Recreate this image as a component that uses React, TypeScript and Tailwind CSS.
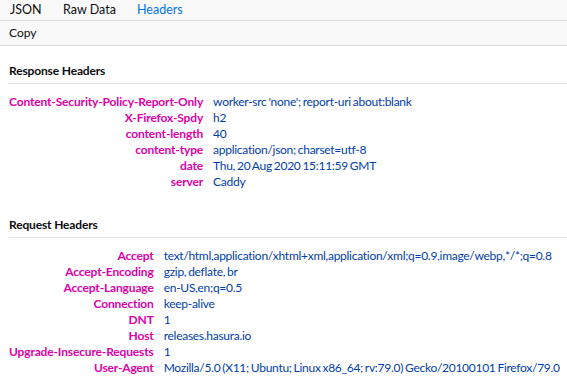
const response = [
  ["Content-Security-Policy-Report-Only", "worker-src 'none'; report-uri about:blank"],
  ["X-Firefox-Spdy", "h2"],
  ["content-length", "40"],
  ["content-type", "application/json; charset=utf-8"],
  ["date", "Thu, 20 Aug 2020 15:11:59 GMT"],
  ["server", "Caddy"],
];

const request = [
  ["Accept", "text/html,application/xhtml+xml,application/xml;q=0.9,image/webp,*/*;q=0.8"],
  ["Accept-Encoding", "gzip, deflate, br"],
  ["Accept-Language", "en-US,en;q=0.5"],
  ["Connection", "keep-alive"],
  ["DNT", "1"],
  ["Host", "releases.hasura.io"],
  ["Upgrade-Insecure-Requests", "1"],
  ["User-Agent", "Mozilla/5.0 (X11; Ubuntu; Linux x86_64; rv:79.0) Gecko/20100101 Firefox/79.0"],
];

function Section({ title, rows }: { title: string; rows: string[][] }) {
  return (
    <div>
      <div className="ml-[9px] pb-[4px] border-b border-[#e0e0e2] font-bold text-[12px] leading-[16px] tracking-[-0.15px] text-[#0c0c0d]">
        {title}
      </div>
      <div className="mt-[10px] grid grid-cols-[auto_1fr] gap-x-[10px] pl-[9px] text-[12px] leading-[16px]">
        {rows.map(([k, v]) => (
          <div key={k} className="contents">
            <div className="text-right font-bold tracking-[-0.15px] text-[#dd00a9] whitespace-nowrap">{k}</div>
            <div className="text-[#003eaa] whitespace-nowrap tracking-[-0.28px] [word-spacing:-0.9px]">{v}</div>
          </div>
        ))}
      </div>
    </div>
  );
}

export default function App() {
  return (
    <div className="w-[567px] h-[382px] bg-white overflow-hidden font-['Lato',sans-serif]">
      <div className="h-[21px] bg-[#f9f9fa] border-b border-[#dcdcde] flex items-center pl-[10px] text-[12.5px] text-[#0c0c0d]">
        <span className="w-[53px]">JSON</span>
        <span className="w-[74px]">Raw Data</span>
        <span className="text-[#0074e8]">Headers</span>
      </div>
      <div className="h-[25px] bg-[#f9f9fa] border-b border-[#dcdcde] flex items-center pl-[9px] text-[12px] text-[#0c0c0d]">
        Copy
      </div>
      <div className="pt-[17px]">
        <Section title="Response Headers" rows={response} />
        <div className="h-[27px]" />
        <Section title="Request Headers" rows={request} />
      </div>
    </div>
  );
}
